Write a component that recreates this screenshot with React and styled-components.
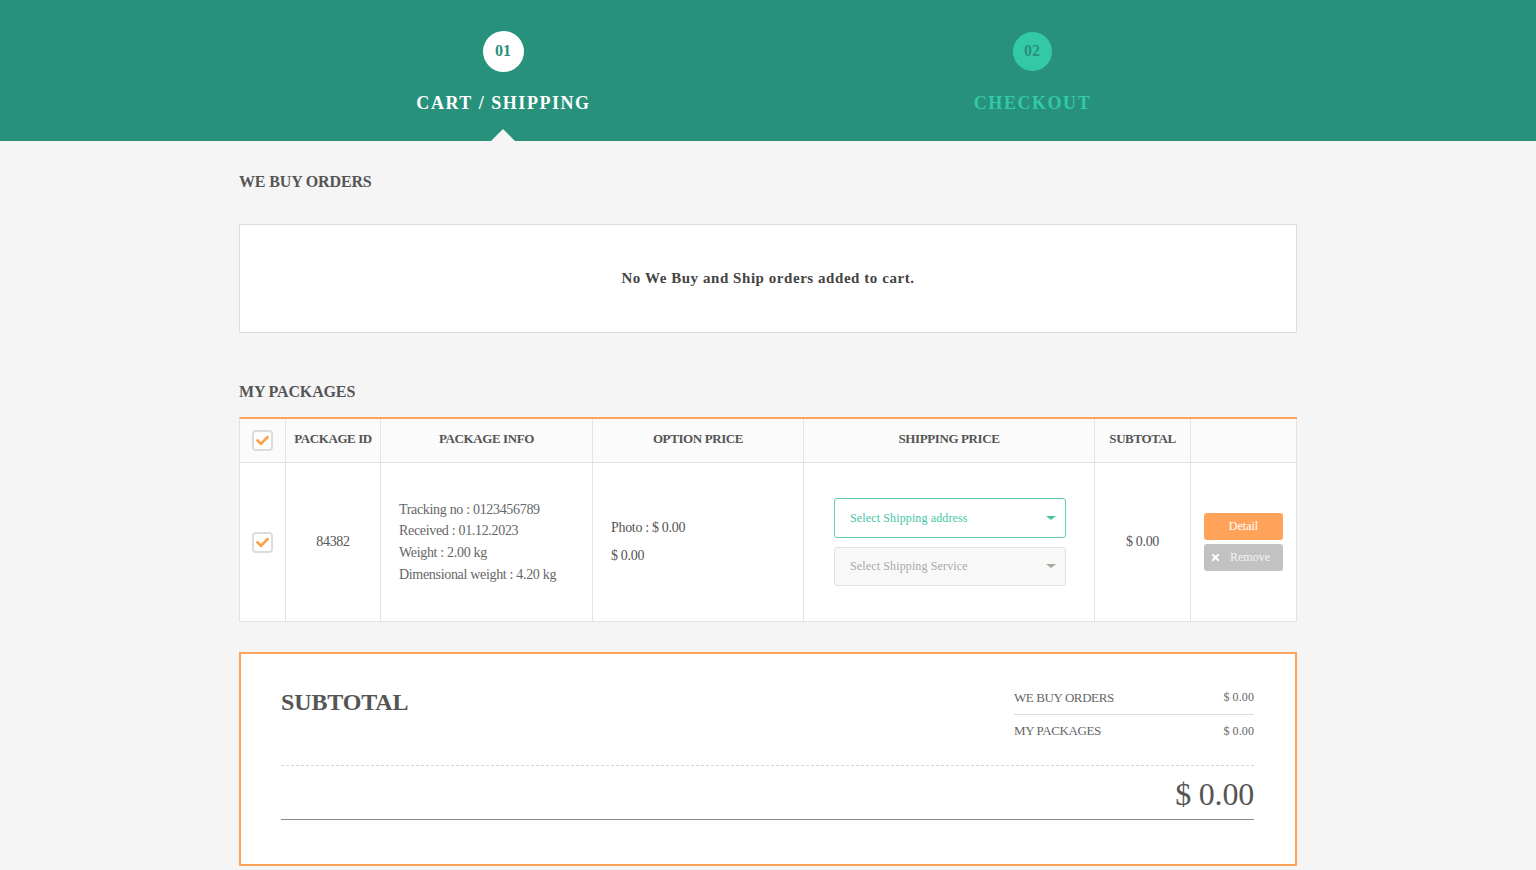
import React from "react";
import styled, { createGlobalStyle } from "styled-components";
import { FaCheck, FaTimes } from "react-icons/fa";

const GlobalStyle = createGlobalStyle`
  html, body {
    margin: 0;
    padding: 0;
    height: 870px;
    overflow: hidden;
    background: #f5f5f5;
    font-family: "Liberation Serif", "Times New Roman", serif;
    color: #555;
  }
  * { box-sizing: border-box; }
`;

const Header = styled.header`
  background: #27917b;
  height: 141px;
`;

const Steps = styled.div`
  width: 1058px;
  margin: 0 auto;
  display: grid;
  grid-template-columns: 1fr 1fr;
`;

const Step = styled.div`
  position: relative;
  height: 141px;
  display: flex;
  flex-direction: column;
  align-items: center;
  padding-top: 31px;

  ${(p) =>
    p.$active &&
    `
    &::after {
      content: "";
      position: absolute;
      left: 50%;
      bottom: 0;
      margin-left: -13px;
      border-left: 12px solid transparent;
      border-right: 12px solid transparent;
      border-bottom: 12px solid #f5f5f5;
    }
  `}
`;

const Circle = styled.div`
  width: ${(p) => (p.$active ? 41 : 39)}px;
  height: ${(p) => (p.$active ? 41 : 39)}px;
  margin: ${(p) => (p.$active ? 0 : 1)}px 0;
  border-radius: 50%;
  display: flex;
  align-items: center;
  justify-content: center;
  background: ${(p) => (p.$active ? "#fff" : "#33c9a7")};
  color: #27917b;
  font-size: 16px;
  font-weight: bold;
  padding: 0 1px 2px 0;
`;

const StepLabel = styled.div`
  margin-top: 21px;
  font-size: 18px;
  line-height: 21px;
  font-weight: bold;
  letter-spacing: 1.55px;
  color: ${(p) => (p.$active ? "#fff" : "#33c9a7")};
`;

const Main = styled.main`
  width: 1058px;
  margin: 0 auto;
`;

const SectionTitle = styled.h2`
  margin: 0;
  font-size: 16px;
  line-height: 18px;
  font-weight: bold;
  letter-spacing: -0.15px;
  color: #555;
  padding-top: ${(p) => p.$top}px;
  padding-bottom: ${(p) => p.$bottom}px;
`;

const EmptyBox = styled.div`
  height: 109px;
  background: #fff;
  border: 1px solid #ddd;
  display: flex;
  align-items: center;
  justify-content: center;
  font-size: 15px;
  font-weight: bold;
  letter-spacing: 0.55px;
  color: #444;
  margin-bottom: 49px;
`;

const Table = styled.div`
  display: grid;
  grid-template-columns: 46px 95px 212px 211px 291px 96px 106px;
  grid-template-rows: 44px 159px;
  border-top: 2px solid #ffa35a;
  border-left: 1px solid #e3e3e3;
  background: #fff;
`;

const HeadCell = styled.div`
  background: #fbfbfb;
  border-right: 1px solid #e3e3e3;
  border-bottom: 1px solid #e3e3e3;
  display: flex;
  align-items: center;
  justify-content: center;
  padding-bottom: ${(p) => (p.$box ? 0 : 3)}px;
  font-size: 13px;
  font-weight: bold;
  letter-spacing: -0.4px;
  color: #555;
  white-space: nowrap;
`;

const Cell = styled.div`
  border-right: 1px solid #e3e3e3;
  border-bottom: 1px solid #e3e3e3;
  display: flex;
  flex-direction: column;
  justify-content: center;
  align-items: ${(p) => p.$align || "center"};
  padding: ${(p) => p.$pad || "0"};
  font-size: 14px;
  letter-spacing: -0.32px;
  color: #555;
`;

const CheckBox = styled.span`
  width: 21px;
  height: 21px;
  border: 2px solid #dcdcdc;
  border-radius: 4px;
  background: #fff;
  display: flex;
  align-items: center;
  justify-content: center;
  color: #ffa049;
  font-size: 13px;
`;

const InfoLine = styled.div`
  line-height: 21.6px;
  white-space: nowrap;
  color: #666;
`;

const PriceLine = styled.div`
  line-height: 28px;
  color: #555;
`;

const Select = styled.div`
  width: 232px;
  height: ${(p) => (p.$disabled ? 39 : 40)}px;
  border: 1px solid ${(p) => (p.$disabled ? "#e2e2e2" : "#62cfb4")};
  border-radius: 3px;
  background: ${(p) => (p.$disabled ? "#f8f8f8" : "#fff")};
  color: ${(p) => (p.$disabled ? "#aaa" : "#46c6a6")};
  font-size: 12px;
  letter-spacing: 0.13px;
  display: flex;
  align-items: center;
  justify-content: space-between;
  padding: 0 9px 0 15px;
  margin-bottom: ${(p) => (p.$disabled ? 0 : 9)}px;

  &::after {
    content: "";
    border-left: 5px solid transparent;
    border-right: 5px solid transparent;
    border-top: 4px solid ${(p) => (p.$disabled ? "#aaa79c" : "#46c6a6")};
    margin-top: -1px;
  }
`;

const DetailButton = styled.button`
  width: 79px;
  height: 27px;
  border: none;
  border-radius: 3px;
  background: #ffa35a;
  color: #fff;
  font-family: inherit;
  font-size: 12px;
  padding: 0;
  margin-bottom: 4px;
`;

const RemoveButton = styled.button`
  width: 79px;
  height: 27px;
  border: none;
  border-radius: 3px;
  background: #c2c2c2;
  color: #f4f4f4;
  font-family: inherit;
  font-size: 12px;
  padding: 0 13px 0 6px;
  display: flex;
  align-items: center;
  justify-content: space-between;

  svg {
    font-size: 11px;
    color: #fff;
  }
`;

const Summary = styled.section`
  margin-top: 30px;
  height: 214px;
  background: #fff;
  border: 2px solid #ffa35a;
  padding: 28px 41px 0 40px;
`;

const SummaryTop = styled.div`
  display: flex;
  justify-content: space-between;
  align-items: flex-start;
  height: 84px;
  border-bottom: 1px dashed #d5d5d5;
`;

const SummaryTitle = styled.h3`
  margin: 5px 0 0;
  font-size: 24px;
  line-height: 30px;
  font-weight: bold;
  letter-spacing: -0.15px;
  color: #555;
`;

const Breakdown = styled.div`
  width: 240px;
  margin-top: -1px;
`;

const BreakdownRow = styled.div`
  display: flex;
  justify-content: space-between;
  align-items: center;
  height: ${(p) => (p.$last ? 32 : 34)}px;
  font-size: 13px;
  letter-spacing: -0.4px;
  color: #666;
  border-bottom: ${(p) => (p.$last ? "none" : "1px solid #ddd")};
`;

const Amount = styled.span`
  font-size: 12px;
  letter-spacing: 0.1px;
`;

const Total = styled.div`
  height: 54px;
  border-bottom: 1px solid #8c8c8c;
  display: flex;
  align-items: center;
  justify-content: flex-end;
  padding-top: 4px;
  font-size: 32px;
  letter-spacing: -0.2px;
  color: #555;
`;

const headers = ["PACKAGE ID", "PACKAGE INFO", "OPTION PRICE", "SHIPPING PRICE", "SUBTOTAL", ""];

export default function App() {
  return (
    <>
      <GlobalStyle />
      <Header>
        <Steps>
          <Step $active>
            <Circle $active>01</Circle>
            <StepLabel $active>CART / SHIPPING</StepLabel>
          </Step>
          <Step>
            <Circle>02</Circle>
            <StepLabel>CHECKOUT</StepLabel>
          </Step>
        </Steps>
      </Header>
      <Main>
        <SectionTitle $top={32} $bottom={33}>WE BUY ORDERS</SectionTitle>
        <EmptyBox>No We Buy and Ship orders added to cart.</EmptyBox>
        <SectionTitle $top={1} $bottom={16}>MY PACKAGES</SectionTitle>
        <Table>
          <HeadCell $box>
            <CheckBox><FaCheck /></CheckBox>
          </HeadCell>
          {headers.map((h, i) => (
            <HeadCell key={i}>{h}</HeadCell>
          ))}
          <Cell>
            <CheckBox><FaCheck /></CheckBox>
          </Cell>
          <Cell>84382</Cell>
          <Cell $align="flex-start" $pad="0 0 0 18px">
            <InfoLine>Tracking no : 0123456789</InfoLine>
            <InfoLine>Received : 01.12.2023</InfoLine>
            <InfoLine>Weight : 2.00 kg</InfoLine>
            <InfoLine>Dimensional weight : 4.20 kg</InfoLine>
          </Cell>
          <Cell $align="flex-start" $pad="0 0 0 18px">
            <PriceLine>Photo : $ 0.00</PriceLine>
            <PriceLine>$ 0.00</PriceLine>
          </Cell>
          <Cell $pad="0 0 0 2px">
            <Select>Select Shipping address</Select>
            <Select $disabled>Select Shipping Service</Select>
          </Cell>
          <Cell>$ 0.00</Cell>
          <Cell>
            <DetailButton>Detail</DetailButton>
            <RemoveButton>
              <FaTimes />
              Remove
            </RemoveButton>
          </Cell>
        </Table>
        <Summary>
          <SummaryTop>
            <SummaryTitle>SUBTOTAL</SummaryTitle>
            <Breakdown>
              <BreakdownRow>
                WE BUY ORDERS<Amount>$ 0.00</Amount>
              </BreakdownRow>
              <BreakdownRow $last>
                MY PACKAGES<Amount>$ 0.00</Amount>
              </BreakdownRow>
            </Breakdown>
          </SummaryTop>
          <Total>$ 0.00</Total>
        </Summary>
      </Main>
    </>
  );
}
